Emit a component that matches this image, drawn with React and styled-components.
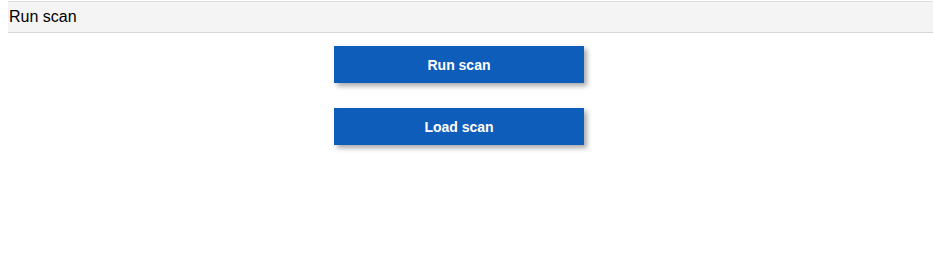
import React from "react";
import styled, { createGlobalStyle } from "styled-components";

const GlobalStyle = createGlobalStyle`
  html, body {
    background: #ffffff;
  }
  body {
    margin: 1px 0 0 8px;
    font-family: "Liberation Sans", Arial, sans-serif;
    color: #000000;
  }
`;

const Header = styled.div`
  height: 30px;
  line-height: 30px;
  padding-left: 1px;
  background-color: #f4f4f4;
  border-top: 1px solid #dcdcdc;
  border-bottom: 1px solid #d6d6d6;
  font-size: 16px;
  margin-right: 1px;
`;

const Actions = styled.div`
  display: flex;
  flex-direction: column;
  align-items: center;
  gap: 25px;
  padding: 13px 24px 12px 0;
`;

const ActionButton = styled.button`
  width: 250px;
  height: 37px;
  border: none;
  border-radius: 0;
  background-color: #0f5dba;
  color: #ffffff;
  font-family: "Liberation Sans", Arial, sans-serif;
  font-size: 14px;
  font-weight: bold;
  box-shadow: 3px 3px 5px rgba(0, 0, 0, 0.35);
  cursor: pointer;
`;

function App() {
  return (
    <>
      <GlobalStyle />
      <Header>Run scan</Header>
      <Actions>
        <ActionButton>Run scan</ActionButton>
        <ActionButton>Load scan</ActionButton>
      </Actions>
    </>
  );
}

export default App;
